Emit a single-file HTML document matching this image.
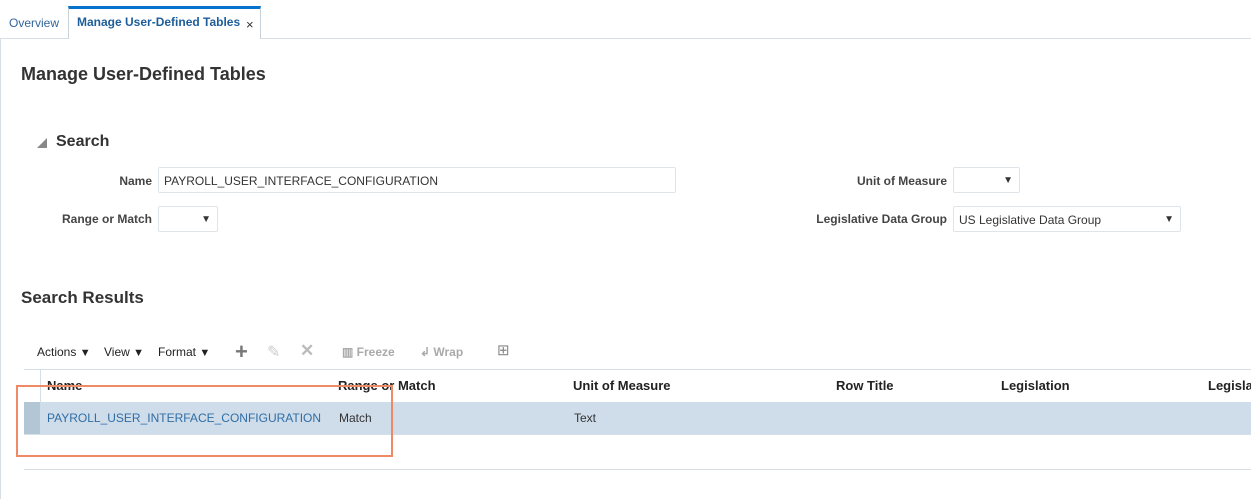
<!DOCTYPE html><html><head><style>
body{margin:0;width:1251px;height:499px;background:#fff;font-family:"Liberation Sans",sans-serif;position:relative;overflow:hidden;font-size:12px;color:#333}
.a{position:absolute;white-space:nowrap}
.sel{position:absolute;height:26px;border:1px solid #dfe4e9;border-radius:2px;background:#fff;box-sizing:border-box;font-size:12px;line-height:26px;padding-left:5px;color:#333}
.sel .ar{position:absolute;right:6px;top:0;font-size:10px}
.lbl{position:absolute;font-weight:bold;font-size:12px;color:#444;text-align:right}
.th{position:absolute;top:378px;font-weight:bold;font-size:13px;color:#222}
.dd{font-size:11px}
</style></head><body>
<div class="a" style="left:0;top:38px;width:1251px;height:1px;background:#d6dfe6"></div>
<div class="a" style="left:0;top:38px;width:1px;height:461px;background:#d6dfe6"></div>
<div class="a" style="left:9px;top:16px;color:#336699;font-size:12px">Overview</div>
<div class="a" style="left:68px;top:6px;width:193px;height:33px;border:1px solid #c9d3dc;border-top:3px solid #0572ce;border-bottom:none;background:#fff;box-sizing:border-box"></div>
<div class="a" style="left:77px;top:15px;color:#1d5e9a;font-weight:bold;font-size:12px">Manage User-Defined Tables</div>
<div class="a" style="left:246px;top:17px;font-size:13px;color:#333">×</div>
<div class="a" style="left:21px;top:64px;font-size:18px;font-weight:bold;color:#333">Manage User-Defined Tables</div>
<div class="a" style="left:37px;top:138px;width:0;height:0;border-left:10px solid transparent;border-bottom:10px solid #888"></div>
<div class="a" style="left:56px;top:133px;font-size:16px;font-weight:bold;color:#333">Search</div>
<div class="lbl" style="right:1099px;top:174px">Name</div>
<div class="sel" style="left:158px;top:167px;width:518px">PAYROLL_USER_INTERFACE_CONFIGURATION</div>
<div class="lbl" style="right:1099px;top:212px">Range or Match</div>
<div class="sel" style="left:158px;top:206px;width:60px"><span class="ar">▼</span></div>
<div class="lbl" style="right:304px;top:174px">Unit of Measure</div>
<div class="sel" style="left:953px;top:167px;width:67px"><span class="ar">▼</span></div>
<div class="lbl" style="right:304px;top:212px">Legislative Data Group</div>
<div class="sel" style="left:953px;top:206px;width:228px">US Legislative Data Group<span class="ar">▼</span></div>
<div class="a" style="left:21px;top:288px;font-size:17px;font-weight:bold;color:#333">Search Results</div>
<div class="a" style="left:37px;top:345px;color:#222">Actions <span class="dd">▼</span></div>
<div class="a" style="left:104px;top:345px;color:#222">View <span class="dd">▼</span></div>
<div class="a" style="left:158px;top:345px;color:#222">Format <span class="dd">▼</span></div>
<div class="a" style="left:235px;top:339px;font-size:22px;font-weight:bold;color:#777">+</div>
<div class="a" style="left:267px;top:342px;font-size:16px;color:#ccc">✎</div>
<div class="a" style="left:300px;top:341px;font-size:17px;font-weight:bold;color:#bbb">✕</div>
<div class="a" style="left:342px;top:345px;color:#aaa;font-weight:bold">▥ Freeze</div>
<div class="a" style="left:420px;top:345px;color:#aaa;font-weight:bold">↲ Wrap</div>
<div class="a" style="left:497px;top:341px;color:#888;font-size:15px">⊞</div>
<div class="a" style="left:24px;top:369px;width:1227px;height:1px;background:#d6dfe6"></div>
<div class="a" style="left:40px;top:370px;width:1px;height:32px;background:#d6dfe6"></div>
<div class="th" style="left:47px">Name</div>
<div class="th" style="left:338px">Range or Match</div>
<div class="th" style="left:573px">Unit of Measure</div>
<div class="th" style="left:836px">Row Title</div>
<div class="th" style="left:1001px">Legislation</div>
<div class="th" style="left:1208px">Legislation</div>
<div class="a" style="left:24px;top:402px;width:1227px;height:32px;background:#cfdcea;border-bottom:1px solid #d6dfe6"></div>
<div class="a" style="left:24px;top:402px;width:16px;height:32px;background:#b3c6d6"></div>
<div class="a" style="left:47px;top:411px;color:#2f6ea5">PAYROLL_USER_INTERFACE_CONFIGURATION</div>
<div class="a" style="left:339px;top:411px;color:#333">Match</div>
<div class="a" style="left:574px;top:411px;color:#333">Text</div>
<div class="a" style="left:16px;top:385px;width:377px;height:72px;border:2px solid #ee8a64;box-sizing:border-box"></div>
<div class="a" style="left:24px;top:469px;width:1227px;height:1px;background:#d6dfe6"></div>
</body></html>
